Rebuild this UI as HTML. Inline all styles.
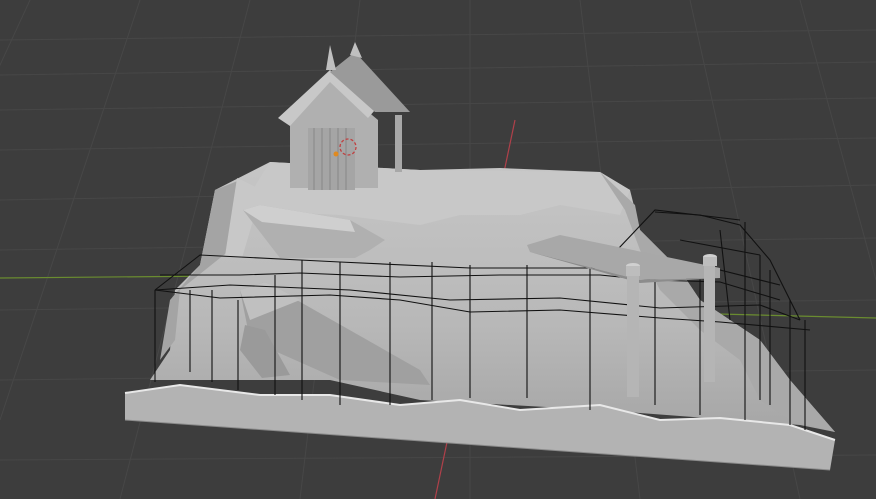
<!DOCTYPE html><html><head><style>html,body{margin:0;padding:0;background:#3d3d3d;overflow:hidden}svg{display:block}</style></head><body>
<svg width="876" height="499" viewBox="0 0 876 499" xmlns="http://www.w3.org/2000/svg">
<defs>
<linearGradient id="tg" x1="0" y1="0" x2="0" y2="1"><stop offset="0" stop-color="#c6c6c6"/><stop offset="0.6" stop-color="#b8b8b8"/><stop offset="1" stop-color="#a6a6a6"/></linearGradient>
</defs>
<rect width="876" height="499" fill="#3d3d3d"/>
<g stroke="#474747" stroke-width="1" fill="none">
<path d="M0 40 L876 30 M0 75 L876 62 M0 110 L876 98 M0 150 L876 138 M0 200 L876 185 M0 250 L876 238 M0 310 L876 300 M0 380 L876 370 M0 460 L876 455"/>
<path d="M30 0 L-200 499 M140 0 L0 420 M250 0 L120 499 M360 0 L300 499 M470 0 L470 499 M580 0 L640 499 M690 0 L800 499 M800 0 L876 280"/>
</g>
<path d="M0 278 L220 276" stroke="#6a8c30" stroke-width="1.2"/>
<path d="M640 312 L876 318" stroke="#6a8c30" stroke-width="1.2"/>
<path d="M515 120 L435 499" stroke="#b0404a" stroke-width="1.2"/>
<!-- terrain -->
<path d="M215 190 L270 162 L420 170 L500 168 L600 172 L630 190 L640 230 L680 270 L700 300 L760 340 L790 380 L835 432 L800 425 L600 410 L420 400 L330 380 L150 380 L170 350 L175 290 L200 265 Z" fill="url(#tg)"/>
<path d="M270 162 L420 170 L600 172 L630 190 L620 215 L560 205 L520 215 L460 215 L420 225 L340 215 L240 210 Z" fill="#c8c8c8"/>
<path d="M600 172 L635 205 L640 230 L680 270 L700 300 L760 340 L790 380 L835 432 L790 420 L760 400 L740 360 L700 330 L660 290 L640 250 L625 210 Z" fill="#a9a9a9"/>
<path d="M215 190 L240 180 L230 250 L180 290 L175 340 L160 360 L170 300 L200 265 Z" fill="#a4a4a4"/>
<!-- base slab -->
<path d="M125 393 L180 385 L260 395 L330 395 L400 405 L460 400 L520 410 L600 405 L660 420 L720 418 L790 425 L835 440 L830 470 L760 465 L125 420 Z" fill="#b3b3b3"/>
<path d="M125 393 L180 385 L260 395 L330 395 L400 405 L460 400 L520 410 L600 405 L660 420 L720 418 L790 425 L835 440" fill="none" stroke="#e8e8e8" stroke-width="2"/>
<path d="M125 420 L830 470" stroke="#8a8a8a" stroke-width="1"/>
<!-- house -->
<path d="M290 120 L330 80 L378 120 L378 188 L290 188 Z" fill="#b0b0b0"/>
<path d="M278 118 L330 70 L375 110 L368 118 L330 82 L290 126 Z" fill="#c8c8c8"/>
<path d="M330 72 L355 52 L410 112 L375 112 Z" fill="#9a9a9a"/>
<path d="M326 70 L330 45 L336 70 Z M350 55 L355 42 L362 58 Z" fill="#c0c0c0"/>
<path d="M308 128 H355 V190 H308 Z" fill="#a5a5a5"/>
<path d="M314 128 V190 M322 128 V190 M330 128 V190 M338 128 V190 M346 128 V190" stroke="#888" stroke-width="1"/>
<path d="M395 115 L402 115 L402 172 L395 172 Z" fill="#a8a8a8"/>
<circle cx="348" cy="147" r="8" fill="none" stroke="#c04040" stroke-width="1.3" stroke-dasharray="3 2"/>
<circle cx="336" cy="154" r="2.5" fill="#e08a20"/>
<!-- rocks -->
<path d="M237 178 L262 190 L242 258 L225 256 Z" fill="#c8c8c8"/>
<path d="M243 210 L260 205 L350 220 L385 240 L370 250 L355 258 L280 258 Z" fill="#b0b0b0"/>
<path d="M243 210 L260 205 L350 220 L355 232 L262 222 Z" fill="#cfcfcf"/>
<path d="M240 290 L265 282 L420 370 L430 385 L340 380 L250 340 Z" fill="#a0a0a0"/>
<path d="M240 290 L265 282 L300 300 L250 320 Z" fill="#c0c0c0"/>
<path d="M245 325 L265 330 L290 375 L262 378 L240 350 Z" fill="#9a9a9a"/>
<!-- wire cage -->
<g stroke="#111" stroke-width="1.1" fill="none">
<path d="M155 290 L200 255 L300 260 L340 262 L470 268 L600 268 L655 210 L740 220"/>
<path d="M160 275 L240 275 L300 273 L400 277 L500 275 L600 275 L650 280 L720 282 L780 300"/>
<path d="M155 290 L230 285 L350 290 L450 300 L560 298 L660 308 L760 305 L800 320"/>
<path d="M155 290 L220 298 L330 295 L400 300 L470 312 L560 310 L660 318 L720 322 L810 330"/>
<path d="M155 290 V382 M190 290 V372 M212 290 V382 M238 300 V390 M275 275 V395 M302 260 V400 M340 262 V405 M390 262 V405 M432 262 V400 M470 265 V398 M527 265 V398 M590 268 V410 M655 272 V405 M700 265 V415 M745 222 V420 M790 300 V425 M805 320 V430"/>
<path d="M655 212 L700 215 L740 225 L770 260 L800 320 M680 240 L760 255 M700 265 L780 285 M720 230 L730 320 M760 255 V400 M770 270 V405"/>
</g>
<!-- dock (in front) -->
<path d="M527 245 L560 235 L720 268 L720 278 L640 280 L530 252 Z" fill="#a8a8a8"/>
<path d="M530 252 L640 280 L720 278 L640 283 Z" fill="#8c8c8c"/>
<rect x="627" y="275" width="12" height="122" fill="#b5b5b5"/>
<rect x="704" y="262" width="11" height="120" fill="#b5b5b5"/>
<ellipse cx="633" cy="266" rx="7" ry="3" fill="#d0d0d0"/>
<rect x="626" y="266" width="14" height="10" fill="#bdbdbd"/>
<ellipse cx="710" cy="257" rx="7" ry="3" fill="#d0d0d0"/>
<rect x="703" y="257" width="14" height="9" fill="#bdbdbd"/>
</svg>
</body></html>
